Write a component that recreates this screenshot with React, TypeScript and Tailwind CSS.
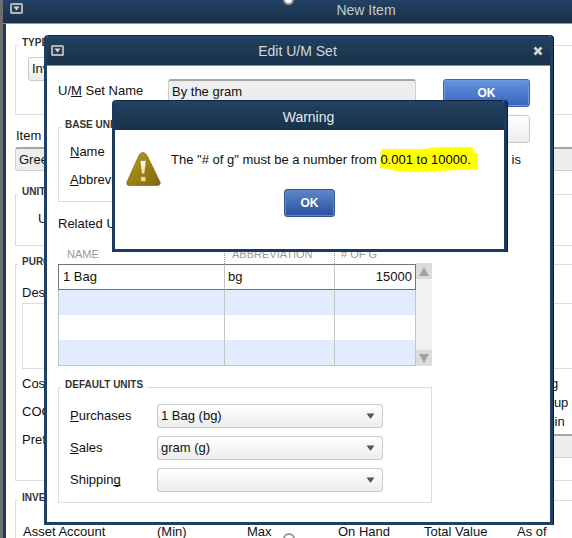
import type { ReactNode } from 'react';

const units = [
  { name: '1 Bag', abbr: 'bg', qty: '15000' },
  { name: '', abbr: '', qty: '' },
  { name: '', abbr: '', qty: '' },
  { name: '', abbr: '', qty: '' },
];

const inventoryLabels = ['Asset Account', '(Min)', 'Max', 'On Hand', 'Total Value', 'As of'];

function MenuIcon() {
  return (
    <svg width="13" height="11" viewBox="0 0 13 11" aria-hidden="true">
      <rect x="1" y="1" width="11" height="9" rx="0.5" fill="#2a3d50" stroke="#aeb4ba" strokeWidth="2" />
      <path d="M3.5 3.5h6L6.5 7.5z" fill="#d5d9dc" />
    </svg>
  );
}

function Caret() {
  return (
    <svg className="absolute right-2 top-[9px] pointer-events-none" width="9" height="6" viewBox="0 0 9 6" aria-hidden="true">
      <path d="M0.5 0.5h8L4.8 5.5h-0.6z" fill="#555" />
    </svg>
  );
}

function WarningIcon() {
  return (
    <svg className="mt-0.5 shrink-0" width="35" height="34" viewBox="0 0 35 34" aria-hidden="true">
      <defs>
        <linearGradient id="gold" x1="0" y1="0" x2="1" y2="1">
          <stop offset="0" stopColor="#b8a02c" />
          <stop offset="0.5" stopColor="#9b8112" />
          <stop offset="1" stopColor="#806612" />
        </linearGradient>
        <linearGradient id="mark" x1="0" y1="0" x2="0" y2="1">
          <stop offset="0" stopColor="#ffffff" />
          <stop offset="1" stopColor="#f0dc8c" />
        </linearGradient>
      </defs>
      <path d="M13.8 2.2Q16.8-1 20 2.2Q22 5 34 30Q35 33.5 31 33.5H3.5Q0 33.5 1 30Q12 5 13.8 2.2z" fill="url(#gold)" stroke="#8a7012" strokeWidth="0.8" />
      <path d="M14 8.5h6.2L18.6 22h-3z" fill="url(#mark)" stroke="#7c6610" strokeWidth="0.5" />
      <rect x="14.6" y="24.6" width="5.2" height="4.8" rx="0.8" fill="#f0dc8c" stroke="#7c6610" strokeWidth="0.5" />
    </svg>
  );
}

function TitleBar({ title, className = '', children }: { title: string; className?: string; children?: ReactNode }) {
  return (
    <div className={`relative flex items-center justify-center bg-linear-to-b from-[#24436a] from-0% via-[#203e5b] via-20% to-[#1a3149] text-[14px] leading-5 ${className}`}>
      {children}
      <h2>{title}</h2>
    </div>
  );
}

function Group({ legend, className = '', children }: { legend: string; className?: string; children: ReactNode }) {
  return (
    <fieldset className="min-w-0 border border-[#dedede]">
      <legend className="ml-0.5 px-1 pb-[5px] pt-px text-[10px] leading-[10px] font-bold text-[#333]">{legend}</legend>
      <div className={className}>{children}</div>
    </fieldset>
  );
}

function Select({ id, options, className = '' }: { id: string; options: string[]; className?: string }) {
  return (
    <div className={`relative ${className}`}>
      <select
        id={id}
        className="block h-6 w-full appearance-none rounded-[3px] border border-[#c9c9c9] bg-linear-to-b from-white to-[#ececec] pl-[3px] pr-6 text-[13px]"
      >
        {options.map(o => <option key={o}>{o}</option>)}
      </select>
      <Caret />
    </div>
  );
}

const fieldStyle = 'h-6 rounded-[3px] border border-[#cfcfcf] border-t-2 border-t-[#a5a5a5] bg-[#eee] px-[3px] text-[13px]';

function NewItemWindow() {
  return (
    <section className="absolute inset-y-0 left-[3px] -right-[157px] border-l-[3px] border-[#1c3a5e] bg-white">
      <TitleBar title="New Item" className="-ml-[3px] h-6 border-b border-[#8494a5] pb-1 text-[#c5cad0]">
        <button aria-label="Window menu" className="absolute left-[7px] top-[3px]"><MenuIcon /></button>
      </TitleBar>
      <div className="px-[9px] pt-[13px] leading-5">
        <Group legend="TYPE" className="px-3 pb-[33px] pt-1">
          <Select id="type" options={['Inventory Part']} className="w-40" />
        </Group>
        <label htmlFor="item" className="mt-[11px] block pb-px pl-px">Item Name/Number</label>
        <input id="item" defaultValue="Green Tea" className={`block w-full ${fieldStyle}`} />
        <div className="mt-[15px]">
          <Group legend="UNIT OF MEASURE" className="pb-4 pl-[22px] pt-[7px]">
            U/M Set
          </Group>
        </div>
        <div className="mt-[10px]">
          <Group legend="PURCHASE INFORMATION" className="px-1.5 pb-[22px] pt-[11px]">
            <label htmlFor="desc" className="block">Description</label>
            <textarea id="desc" className="block h-[66px] w-full resize-none border border-[#dedede]" />
            <div className="mt-[5px] flex">
              <div className="flex flex-1 flex-col gap-2">
                <span>Cost</span>
                <span>COGS Account</span>
                <span>Preferred Vendor</span>
              </div>
              <div className="w-[188px] leading-[19px]">
                <p>Using</p>
                <p>Markup</p>
                <p>Margin</p>
                <input aria-label="Markup or margin" className={`mt-[3px] block w-full ${fieldStyle}`} />
              </div>
            </div>
          </Group>
        </div>
        <div className="mt-[11px]">
          <Group legend="INVENTORY INFORMATION" className="pl-[7px] pt-[14px]">
            <div className="grid grid-cols-[134px_90px_91px_86px_93px_auto]">
              {inventoryLabels.map(l => <span key={l}>{l}</span>)}
            </div>
          </Group>
        </div>
      </div>
    </section>
  );
}

function UnitTable() {
  return (
    <div className="mt-[10px] flex items-end">
      <table className="flex-1 table-fixed border-separate border-spacing-0">
        <colgroup>
          <col className="w-[166px]" />
          <col className="w-[110px]" />
          <col />
        </colgroup>
        <thead>
          <tr className="h-5 text-left text-[11px] text-[#999]">
            <th className="p-0 pl-[9px] font-normal">NAME</th>
            <th className="border-l border-dotted border-[#999] p-0 pl-[7px] font-normal">ABBREVIATION</th>
            <th className="border-l border-dotted border-[#999] p-0 pl-[6px] font-normal"># OF G</th>
          </tr>
        </thead>
        <tbody>
          {units.map((u, i) => {
            const cell = i === 0 ? 'border-y border-y-[#6b776f] h-[26px]' : i === 3 ? 'border-b border-b-[#c4c4c4] h-[26px]' : 'h-[25px]';
            return (
              <tr key={i} className={i % 2 ? 'bg-[#e1edfe]' : 'bg-white'}>
                <td className={`border-l p-0 pl-1 ${i === 0 ? 'border-l-[#6b776f]' : 'border-l-[#c4c4c4]'} ${cell}`}>{u.name}</td>
                <td className={`border-l border-l-[#c4c4c4] p-0 pl-[3px] ${cell}`}>{u.abbr}</td>
                <td className={`border-x border-l-[#c4c4c4] p-0 pr-[3px] text-right ${i === 0 ? 'border-r-[#6b776f]' : 'border-r-[#c4c4c4]'} ${cell}`}>{u.qty}</td>
              </tr>
            );
          })}
        </tbody>
      </table>
      {/* Scrollbar */}
      <div className="flex h-[103px] w-4 flex-col justify-between bg-[#f1f1f1]">
        <button aria-label="Scroll up" className="flex h-4 items-center justify-center bg-[#dcdcdc]">
          <svg width="10" height="9" viewBox="0 0 10 9"><path d="M5 0l5 9H0z" fill="#a3a3a3" /></svg>
        </button>
        <button aria-label="Scroll down" className="flex h-4 items-center justify-center bg-[#dcdcdc]">
          <svg width="10" height="9" viewBox="0 0 10 9"><path d="M0 0h10L5 9z" fill="#a3a3a3" /></svg>
        </button>
      </div>
    </div>
  );
}

function EditSetWindow() {
  return (
    <section className="absolute left-11 right-[19px] top-[35px] overflow-hidden rounded-t-[4px] border-x-[3px] border-b-[3px] border-[#1f3f63] bg-white shadow-[1px_0_0_#0b1726]">
      <TitleBar title="Edit U/M Set" className="h-[31px] border-b border-t border-b-[#8494a5] border-t-[#142b45] pr-0.5 text-[#d3d7db]">
        <button aria-label="Window menu" className="absolute left-1 top-[9px]"><MenuIcon /></button>
        <button aria-label="Close" className="absolute right-[7px] top-[10px]">
          <svg width="10" height="10" viewBox="0 0 10 10"><path d="M1.5 1.5l7 7M8.5 1.5l-7 7" stroke="#d5d5d5" strokeWidth="2.8" /></svg>
        </button>
      </TitleBar>
      <div className="flex gap-[11px] pb-[19px] pl-[11px] pr-5 pt-[13px] leading-5">
        <div className="min-w-0 flex-1">
          <div className="flex items-center pr-4">
            <label htmlFor="set-name" className="w-[110px]">U/<u>M</u> Set Name</label>
            <input id="set-name" defaultValue="By the gram" className={`min-w-0 flex-1 ${fieldStyle}`} />
          </div>
          <div className="mt-4">
            <Group legend="BASE UNIT" className="px-[11px] pb-[11px] pt-[7px]">
              <div className="grid grid-cols-[87px_1fr] gap-y-2">
                <label htmlFor="base-name"><u>N</u>ame</label>
                <input id="base-name" defaultValue="gram" className="h-5 min-w-0 bg-[#eee]" />
                <label htmlFor="base-abbr"><u>A</u>bbreviation</label>
                <input id="base-abbr" defaultValue="g" className="h-5 min-w-0 bg-[#eee]" />
              </div>
            </Group>
          </div>
          <p className="mt-3">Related Units</p>
          <UnitTable />
          <div className="mt-[13px]">
            <Group legend="DEFAULT UNITS" className="pb-[10px] pl-[11px] pr-12 pt-[9px]">
              <div className="grid grid-cols-[87px_1fr] items-center gap-y-2">
                <label htmlFor="purchases"><u>P</u>urchases</label>
                <Select id="purchases" options={['1 Bag (bg)']} />
                <label htmlFor="sales"><u>S</u>ales</label>
                <Select id="sales" options={['gram (g)']} />
                <label htmlFor="shipping">Shippin<u className="[text-decoration-skip-ink:none]">g</u></label>
                <Select id="shipping" options={['']} />
              </div>
            </Group>
          </div>
        </div>
        <div className="w-[87px]">
          <button className="block h-7 w-full rounded-[3px] border border-[#3f64a8] bg-linear-to-b from-[#6695db] to-[#3a62c2] text-[12px] font-bold text-white shadow-[inset_0_0_0_1px_#6f97dc]">OK</button>
          <button className="mt-2 block h-7 w-full rounded-[3px] border border-[#c9c9c9] bg-linear-to-b from-white to-[#ececec] text-[12px]">Cancel</button>
          <label className="mt-[7px] flex gap-[5px] whitespace-nowrap">
            <input type="checkbox" className="mt-1 size-[13px]" />
            <span>U/M Set is<br />inactive</span>
          </label>
        </div>
      </div>
    </section>
  );
}

function WarningDialog() {
  return (
    <section role="alertdialog" aria-label="Warning" className="absolute left-28 right-[65px] top-[100px] overflow-hidden rounded-t-[4px] border-x-[3px] border-b-[3px] border-[#1c3a5e] bg-white shadow-[1px_0_0_#0b1726]">
      <TitleBar title="Warning" className="h-[30px] border-t border-[#0f2136] pt-0.5 pr-0.5 text-[#e6e8ea]" />
      <div className="px-[11px] pb-8 pt-5 leading-5">
        <div className="flex items-start gap-[10px]">
          <WarningIcon />
          <p className="whitespace-nowrap">
            The "# of g" must be a number from{' '}
            <mark className="relative isolate inline-block bg-transparent text-black">
              <svg className="absolute left-0 -top-1 -z-10" width="100" height="27" viewBox="0 0 100 27" aria-hidden="true">
                <path d="M1 3H47V2L64 1L93 1V6L98 7V23L80 24L60 25L36 26L14 25V24L0 22Z" fill="#ffff00" />
              </svg>
              0.001 to 10000.
            </mark>
          </p>
        </div>
        <button className="mx-auto mt-[3px] block h-7 w-[51px] rounded-[3px] border border-[#34538c] bg-linear-to-b from-[#5b88c9] to-[#2c4f9e] text-[12px] font-bold text-white shadow-[inset_0_0_0_1px_#6388c6]">OK</button>
      </div>
    </section>
  );
}

export default function App() {
  return (
    <div className="relative min-h-screen overflow-hidden bg-[#6e6e6e] font-['Liberation_Sans',Arial,sans-serif] text-[13px] text-[#111]">
      <NewItemWindow />
      <EditSetWindow />
      <WarningDialog />
      {/* Resize handles */}
      <span className="absolute left-1/2 -top-[6px] size-[11px] -ml-[3px] rounded-full border-2 border-[#999] bg-white" />
      <span className="absolute left-1/2 -bottom-[7px] size-[12px] -ml-[3px] rounded-full border-2 border-[#999] bg-white" />
    </div>
  );
}
